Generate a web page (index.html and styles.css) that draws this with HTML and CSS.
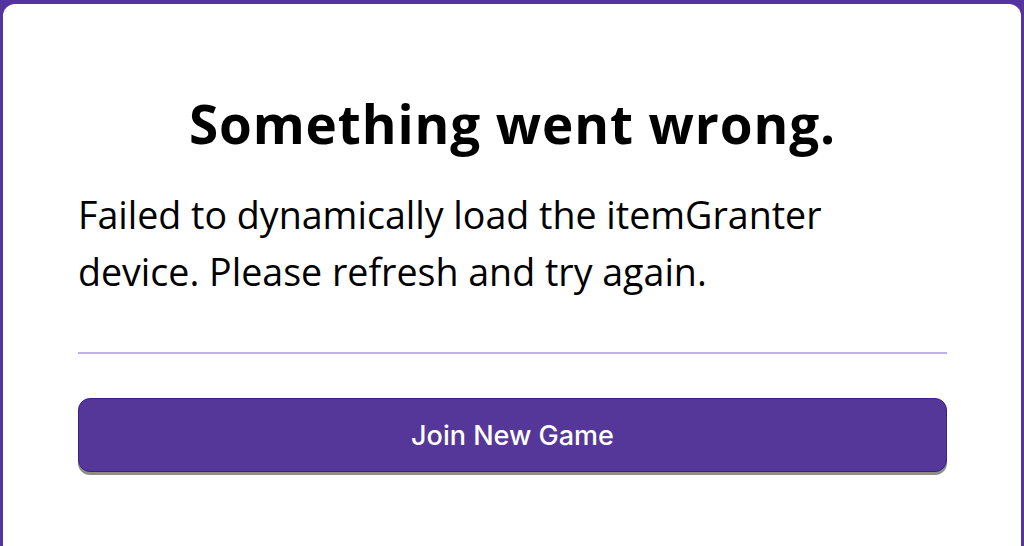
FILE: index.html
```html
<!DOCTYPE html>
<html>
<head>
<meta charset="utf-8">
<link rel="stylesheet" href="styles.css">
</head>
<body>
<div class="frame">
  <div class="card">
    <h1 class="title">Something went wrong.</h1>
    <p class="message">Failed to dynamically load the itemGranter device. Please refresh and try again.</p>
    <hr class="divider">
    <button class="join">Join New Game</button>
  </div>
</div>
</body>
</html>
```
FILE: styles.css
```css
html, body {
  margin: 0;
  padding: 0;
  height: 100%;
  overflow: hidden;
}
body {
  background: #5533a0;
}
.frame {
  padding: 4px 3px 0 3px;
  height: 100%;
  box-sizing: border-box;
  overflow: hidden;
}
.card {
  background: #ffffff;
  border-radius: 12px;
  height: 600px;
  box-sizing: border-box;
  padding: 88px 74px 0 75px;
  display: flex;
  flex-direction: column;
}
.title {
  margin: 0;
  text-align: center;
  font-family: "Open Sans", "Lato", sans-serif;
  font-weight: 700;
  font-size: 53px;
  letter-spacing: 0.9px;
  line-height: 64px;
  color: #000;
}
.message {
  margin: 30px 0 0 0;
  font-family: "Open Sans", "Lato", sans-serif;
  font-size: 37.6px;
  letter-spacing: 0;
  line-height: 57px;
  color: #000;
}
.divider {
  margin: 52px 0 0 0;
  border: none;
  height: 2px;
  background: #c2adf2;
}
.join {
  margin-top: 44px;
  height: 74px;
  border: 1px solid #3c1f86;
  border-radius: 12px;
  background: #55379a;
  box-shadow: 0 3px 0 #8e8e86;
  color: #ffffff;
  font-family: "Inter", "Liberation Sans", sans-serif;
  font-weight: 500;
  font-size: 27px;
}
```
